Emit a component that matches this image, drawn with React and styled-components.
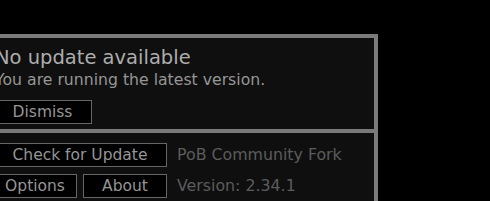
import React from 'react';
import styled, { createGlobalStyle } from 'styled-components';

const GlobalStyle = createGlobalStyle`
    html, body {
        margin: 0;
        padding: 0;
        background: #000;
        overflow: hidden;
    }
    body {
        font-family: "DejaVu Sans", "Liberation Sans", sans-serif;
    }
`;

const Page = styled.div`
    padding-top: 34px;
    height: 201px;
    box-sizing: border-box;
    overflow: hidden;
`;

const Panel = styled.div`
    margin-left: -11px;
    width: 389px;
    box-sizing: border-box;
    border: 4px solid #7a7a7a;
    border-bottom: none;
    background: #0f0f0f;
`;

const Section = styled.div`
    padding: ${p => p.$pad};
    display: flex;
    flex-direction: column;
`;

const Divider = styled.div`
    height: 4px;
    background: #7a7a7a;
`;

const Title = styled.div`
    font-size: 19.5px;
    line-height: 20px;
    color: #adadad;
    padding-left: 2px;
`;

const Subtitle = styled.div`
    font-size: 15.7px;
    line-height: 16px;
    color: #969696;
    margin-top: 4px;
    padding-left: 2px;
`;

const Button = styled.button`
    box-sizing: border-box;
    width: ${p => p.$w}px;
    height: 24px;
    padding: 1px 0 0;
    margin: 0;
    background: #000;
    border: 1px solid #666;
    color: #959595;
    font-family: "DejaVu Sans", "Liberation Sans", sans-serif;
    font-size: 15.5px;
    line-height: 21px;
    text-align: center;
    cursor: pointer;
`;

const Row = styled.div`
    display: flex;
    align-items: center;
    gap: 6px;
    margin-top: ${p => p.$top || 0}px;
`;

const Label = styled.span`
    margin-left: 4px;
    font-size: 15.8px;
    line-height: 24px;
    padding-top: 1px;
    color: #5c5c5c;
    white-space: nowrap;
`;

export default function App() {
    return <>
        <GlobalStyle />
        <Page>
            <Panel>
                <Section $pad="10px 0 5px 0">
                    <Title>No update available</Title>
                    <Subtitle>You are running the latest version.</Subtitle>
                    <Row $top={12}>
                        <Button $w={99}>Dismiss</Button>
                    </Row>
                </Section>
                <Divider />
                <Section $pad="9px 0 20px 0">
                    <Row>
                        <Button $w={174}>Check for Update</Button>
                        <Label>PoB Community Fork</Label>
                    </Row>
                    <Row $top={6}>
                        <Button $w={84}>Options</Button>
                        <Button $w={84}>About</Button>
                        <Label>Version: 2.34.1</Label>
                    </Row>
                </Section>
            </Panel>
        </Page>
    </>;
}
